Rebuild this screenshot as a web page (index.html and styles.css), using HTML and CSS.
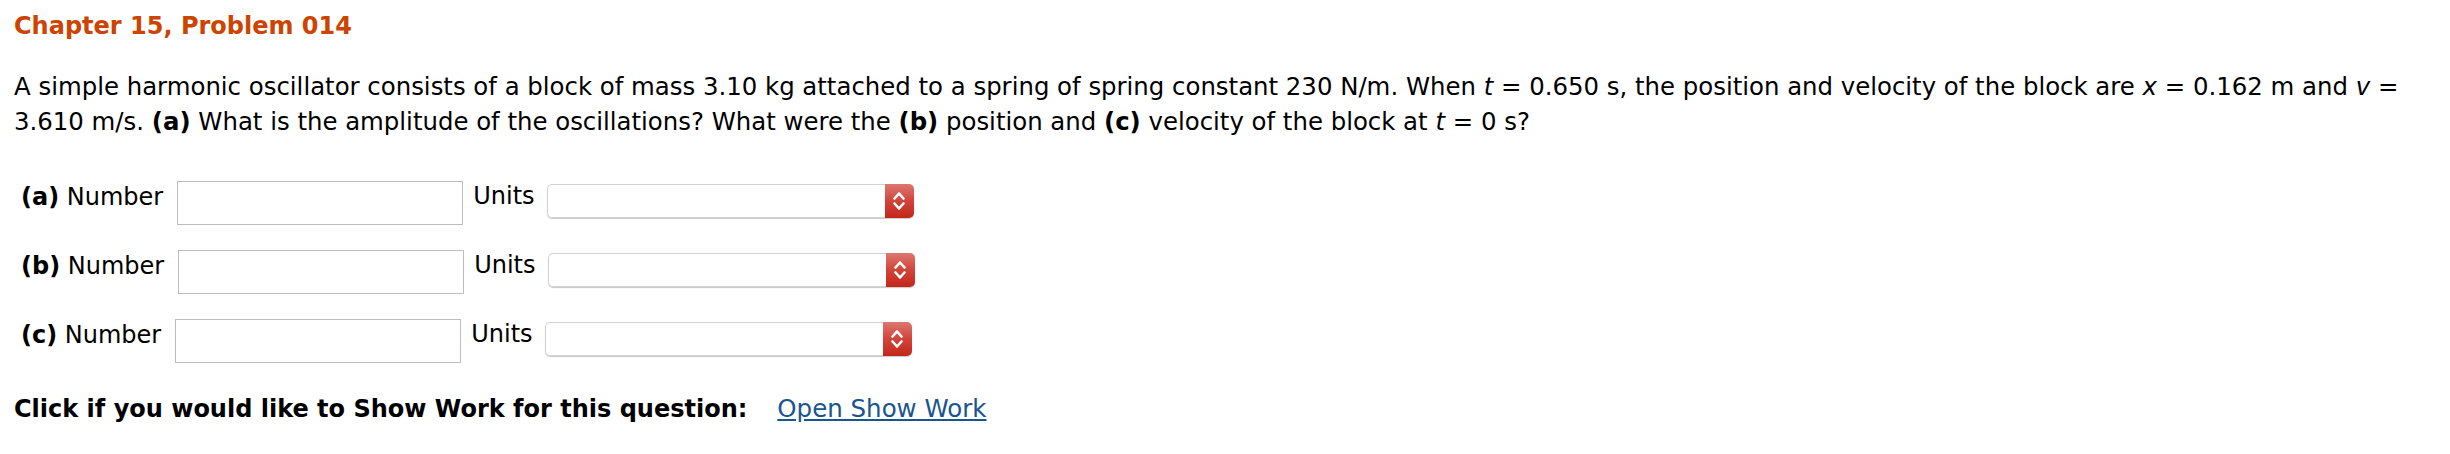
FILE: index.html
```html
<!DOCTYPE html>
<html lang="en">
<head>
<meta charset="utf-8">
<title>Chapter 15, Problem 014</title>
<link rel="stylesheet" href="styles.css">
</head>
<body>
<div class="page">
  <h1 class="title">Chapter 15, Problem 014</h1>
  <p class="question">A simple harmonic oscillator consists of a block of mass 3.10 kg attached to a spring of spring constant 230 N/m. When <i>t</i> = 0.650 s, the position and velocity of the block are <i>x</i> = 0.162 m and <i>v</i> = 3.610 m/s. <b>(a)</b> What is the amplitude of the oscillations? What were the <b>(b)</b> position and <b>(c)</b> velocity of the block at <i>t</i> = 0 s?</p>

  <div class="answers">
    <div class="row">
      <label class="label"><b>(a)</b> Number</label>
      <input class="number" type="text">
      <span class="units-label">Units</span>
      <div class="select">
        <select class="select-field"><option></option></select>
        <span class="select-arrow"><svg width="14" height="24" viewBox="0 0 14 24"><path d="M2.5 9.5 L7 4.5 L11.5 9.5" fill="none" stroke="#fff" stroke-width="2.6" stroke-linecap="round" stroke-linejoin="round"/><path d="M2.5 14.5 L7 19.5 L11.5 14.5" fill="none" stroke="#fff" stroke-width="2.6" stroke-linecap="round" stroke-linejoin="round"/></svg></span>
      </div>
    </div>
    <div class="row">
      <label class="label"><b>(b)</b> Number</label>
      <input class="number" type="text">
      <span class="units-label">Units</span>
      <div class="select">
        <select class="select-field"><option></option></select>
        <span class="select-arrow"><svg width="14" height="24" viewBox="0 0 14 24"><path d="M2.5 9.5 L7 4.5 L11.5 9.5" fill="none" stroke="#fff" stroke-width="2.6" stroke-linecap="round" stroke-linejoin="round"/><path d="M2.5 14.5 L7 19.5 L11.5 14.5" fill="none" stroke="#fff" stroke-width="2.6" stroke-linecap="round" stroke-linejoin="round"/></svg></span>
      </div>
    </div>
    <div class="row">
      <label class="label"><b>(c)</b> Number</label>
      <input class="number" type="text">
      <span class="units-label">Units</span>
      <div class="select">
        <select class="select-field"><option></option></select>
        <span class="select-arrow"><svg width="14" height="24" viewBox="0 0 14 24"><path d="M2.5 9.5 L7 4.5 L11.5 9.5" fill="none" stroke="#fff" stroke-width="2.6" stroke-linecap="round" stroke-linejoin="round"/><path d="M2.5 14.5 L7 19.5 L11.5 14.5" fill="none" stroke="#fff" stroke-width="2.6" stroke-linecap="round" stroke-linejoin="round"/></svg></span>
      </div>
    </div>
  </div>

  <p class="showwork"><b class="showwork-text">Click if you would like to Show Work for this question:</b><a class="showwork-link" href="#">Open Show Work</a></p>
</div>
</body>
</html>
```

FILE: styles.css
```css
html, body {
  margin: 0;
  padding: 0;
  background: #fff;
}

body {
  font-family: "DejaVu Sans", Verdana, sans-serif;
  color: #000;
}

.page {
  padding: 0 14px;
}

.title {
  margin: 12px 0 0;
  font-size: 24px;
  line-height: 28px;
  font-weight: bold;
  color: #cc4400;
}

.question {
  margin: 29px 0 0;
  font-size: 24.4px;
  line-height: 35px;
}

.answers {
  margin-top: 42px;
  display: flex;
  flex-direction: column;
  gap: 25px;
}

.row {
  display: flex;
  align-items: flex-start;
  height: 44px;
}

.label {
  font-size: 24px;
  line-height: 28px;
  padding: 2px 0 0 7px;
  margin-right: 14px;
}

.number {
  box-sizing: border-box;
  width: 286px;
  height: 44px;
  margin: 0;
  border: 1px solid #bdbdbd;
  border-radius: 0;
  background: #fff;
  font-size: 20px;
}

.units-label {
  font-size: 24px;
  line-height: 28px;
  padding-top: 1px;
  margin-left: 10px;
  margin-right: 12px;
}

.select {
  display: flex;
  margin-top: 3px;
  width: 367px;
  height: 34px;
  border-radius: 5px;
  box-shadow: 0 1px 1px rgba(0, 0, 0, 0.22);
}

.select-field {
  flex: 1;
  appearance: none;
  -webkit-appearance: none;
  margin: 0;
  height: 34px;
  border: 1px solid #d2d2d2;
  border-right: none;
  border-radius: 5px 0 0 5px;
  background: #fff;
  font-size: 18px;
}

.select-arrow {
  width: 29px;
  height: 34px;
  display: flex;
  align-items: center;
  justify-content: center;
  border-radius: 0 5px 5px 0;
  background: linear-gradient(#dc7870, #d1443a 50%, #c2261a);
}

.showwork {
  margin: 32px 0 0;
  font-size: 24px;
  line-height: 28px;
  display: flex;
  align-items: baseline;
}

.showwork-text {
  font-weight: bold;
}

.showwork-link {
  margin-left: 30px;
  font-size: 24.5px;
  color: #1a5590;
  text-decoration: underline;
}
```
